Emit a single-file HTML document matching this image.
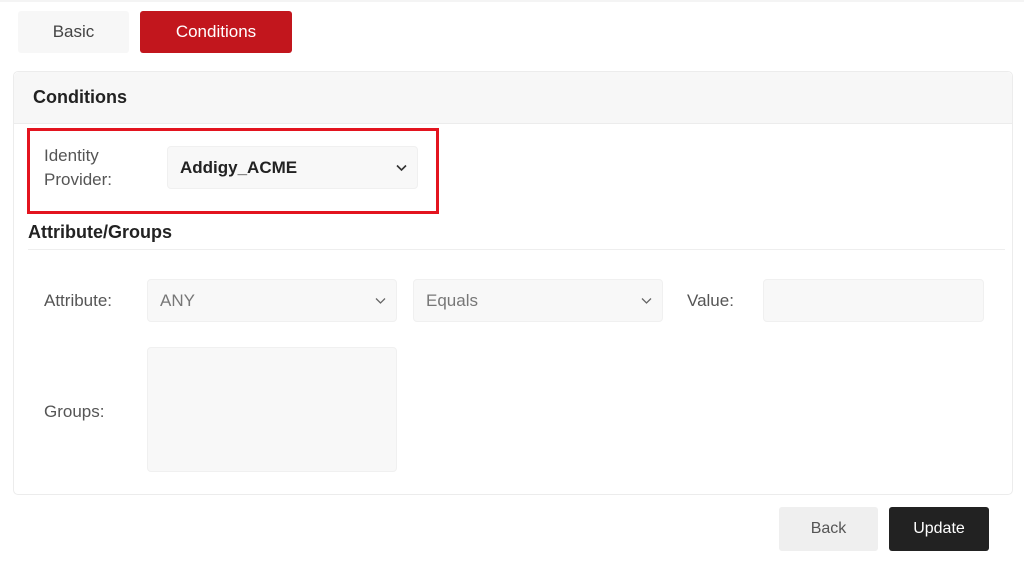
<!DOCTYPE html>
<html><head><style>
*{box-sizing:border-box;margin:0;padding:0}
body{width:1024px;height:563px;background:#fff;font-family:"Liberation Sans",Arial,sans-serif;position:relative;overflow:hidden;color:#555}
.a{position:absolute}
.tab{display:flex;align-items:center;justify-content:center;font-size:17px;border-radius:3px}
.sel{background:#f8f8f8;border:1px solid #f0f0f0;border-radius:4px;display:flex;align-items:center;padding-left:12px;font-size:17px}
.chev{position:absolute;right:10px;top:50%;margin-top:-4px}
.lbl{font-size:17px;color:#555}
</style></head><body>
<div class="a" style="left:0;top:0;width:1024px;height:2px;background:#f4f4f4"></div>
<div class="a tab" style="left:18px;top:11px;width:111px;height:42px;background:#f7f7f7;color:#444">Basic</div>
<div class="a tab" style="left:140px;top:11px;width:152px;height:42px;background:#c2161d;color:#fff">Conditions</div>
<div class="a" style="left:13px;top:71px;width:1000px;height:424px;border:1px solid #ececec;border-radius:5px"></div>
<div class="a" style="left:14px;top:72px;width:998px;height:52px;background:#f7f7f7;border-bottom:1px solid #ececec;border-radius:5px 5px 0 0"></div>
<div class="a" style="left:33px;top:87px;font-size:18px;font-weight:bold;color:#222">Conditions</div>
<div class="a" style="left:27px;top:128px;width:412px;height:86px;border:3px solid #e3141f"></div>
<div class="a lbl" style="left:44px;top:144px;line-height:24px">Identity<br>Provider:</div>
<div class="a sel" style="left:167px;top:146px;width:251px;height:43px;font-weight:bold;color:#222;font-size:17px">Addigy_ACME
<svg class="chev" width="11" height="8" viewBox="0 0 11 8"><path d="M1 1.5L5.5 6L10 1.5" stroke="#333" stroke-width="1.6" fill="none"/></svg></div>
<div class="a" style="left:28px;top:222px;font-size:18px;font-weight:bold;color:#222">Attribute/Groups</div>
<div class="a" style="left:28px;top:249px;width:977px;height:1px;background:#eee"></div>
<div class="a lbl" style="left:44px;top:291px">Attribute:</div>
<div class="a sel" style="left:147px;top:279px;width:250px;height:43px;color:#777">ANY
<svg class="chev" width="11" height="8" viewBox="0 0 11 8"><path d="M1 1.5L5.5 6L10 1.5" stroke="#666" stroke-width="1.3" fill="none"/></svg></div>
<div class="a sel" style="left:413px;top:279px;width:250px;height:43px;color:#777">Equals
<svg class="chev" width="11" height="8" viewBox="0 0 11 8"><path d="M1 1.5L5.5 6L10 1.5" stroke="#666" stroke-width="1.3" fill="none"/></svg></div>
<div class="a lbl" style="left:687px;top:291px">Value:</div>
<div class="a sel" style="left:763px;top:279px;width:221px;height:43px"></div>
<div class="a lbl" style="left:44px;top:402px">Groups:</div>
<div class="a sel" style="left:147px;top:347px;width:250px;height:125px"></div>
<div class="a tab" style="left:779px;top:507px;width:99px;height:44px;background:#efefef;color:#555;font-size:16px">Back</div>
<div class="a tab" style="left:889px;top:507px;width:100px;height:44px;background:#222;color:#fff;font-size:16px">Update</div>
</body></html>
